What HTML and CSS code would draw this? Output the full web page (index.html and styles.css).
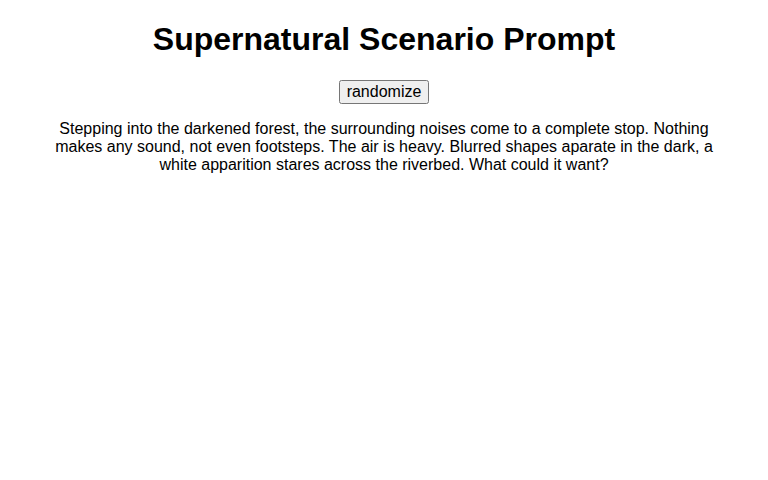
FILE: index.html
```html
<!DOCTYPE html>
<html lang="en">
<head>
    <meta charset="UTF-8">
    <meta name="viewport" content="width=device-width, initial-scale=1.0">
    <title>Supernatural Scenario Prompt</title>
    <link rel="stylesheet" href="styles.css">
</head>
<body>
    <div class="container">
        <h1>Supernatural Scenario Prompt</h1>
        <button id="randomize-btn">randomize</button>
        <p id="prompt">Stepping into the darkened forest, the surrounding noises come to a complete stop. Nothing makes any sound, not even footsteps. The air is heavy. Blurred shapes aparate in the dark, a white apparition stares across the riverbed. What could it want?</p>
    </div>
</body>
</html>
```

FILE: styles.css
```css
body {
    margin: 8px;
    font-family: 'Liberation Sans', Arial, sans-serif;
    color: #000;
    background-color: #fff;
}

.container {
    max-width: 680px;
    margin: 0 auto;
    text-align: center;
}

h1 {
    font-size: 2em;
    margin: 13.4px 0 21.4px;
}

#randomize-btn {
    font-family: 'Liberation Sans', Arial, sans-serif;
    font-size: 16px;
}

#prompt {
    font-size: 16px;
    line-height: 18px;
}
```
